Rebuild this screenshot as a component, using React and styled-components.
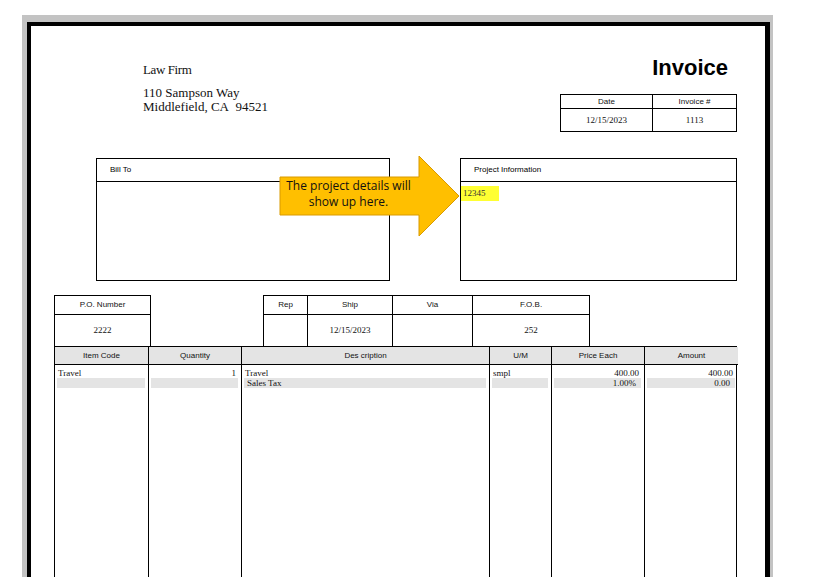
import React from 'react';
import styled, { createGlobalStyle } from 'styled-components';

const Global = createGlobalStyle`
  html, body { margin: 0; padding: 0; background: #fff; overflow: hidden; }
  body { width: 820px; height: 577px; }
`;

const Viewer = styled.div`
  width: 820px;
  height: 577px;
  background: #fff;
  padding: 15px 0 0 22px;
  box-sizing: border-box;
  overflow: hidden;
`;

const GrayBand = styled.div`
  width: 751px;
  height: 600px;
  background: #c3c3c3;
  padding: 7px 3px 0 5px;
  box-sizing: border-box;
`;

const Frame = styled.div`
  height: 600px;
  border: solid #000;
  border-width: 4px 5px 0 4px;
  background: #fff;
  box-sizing: border-box;
`;

const Content = styled.div`
  width: 683px;
  margin-left: 23px;
`;

const Header = styled.div`
  display: flex;
  justify-content: space-between;
  margin-left: 89px;
  padding-top: 30px;
  height: 105px;
  box-sizing: border-box;
`;

const Address = styled.div`
  font-family: "Liberation Serif", serif;
  font-size: 13px;
  line-height: 14px;
  color: #111;
  padding-top: 7px;
`;

const AddrLine = styled.div`
  margin-bottom: ${p => p.gap || 0}px;
  letter-spacing: ${p => p.tight ? '-0.4px' : '0'};
`;

const RightHead = styled.div`
  display: flex;
  flex-direction: column;
  align-items: flex-end;
`;

const Title = styled.div`
  font-family: "Liberation Sans", Arial, sans-serif;
  font-weight: bold;
  font-size: 22px;
  line-height: 24px;
  color: #000;
  margin-right: 9px;
  margin-bottom: 14px;
`;

const Table = styled.div`
  display: grid;
  grid-template-columns: ${p => p.cols};
  width: ${p => p.w}px;
  margin-left: ${p => p.ml || 0}px;
  border: 1px solid #000;
  box-sizing: border-box;
`;

const Head = styled.div`
  font-family: "Liberation Sans", Arial, sans-serif;
  font-size: 8px;
  color: #111;
  text-align: center;
  height: ${p => p.h || 13}px;
  line-height: ${p => p.h || 13}px;
  border-bottom: 1px solid #000;
  border-left: ${p => p.first ? 'none' : '1px solid #000'};
  background: ${p => p.shade ? '#e4e4e4' : '#fff'};
`;

const Cell = styled.div`
  font-family: "Liberation Serif", serif;
  font-size: 9px;
  color: #111;
  text-align: center;
  height: ${p => p.h || 22}px;
  line-height: ${p => p.h || 22}px;
  border-left: ${p => p.first ? 'none' : '1px solid #000'};
`;

const BoxRow = styled.div`
  display: flex;
  gap: 70px;
  margin-left: 42px;
  margin-top: 27px;
  position: relative;
`;

const Box = styled.div`
  width: ${p => p.w}px;
  height: 123px;
  border: 1px solid #000;
  box-sizing: border-box;
`;

const BoxHead = styled.div`
  font-family: "Liberation Sans", Arial, sans-serif;
  font-size: 8px;
  height: 22px;
  line-height: 22px;
  padding-left: 13px;
  border-bottom: 1px solid #000;
`;

const Highlight = styled.span`
  display: inline-block;
  margin-top: 0;
  background: #ffff33;
  font-family: "Liberation Serif", serif;
  font-size: 9px;
  padding: 2px 14px 3px 2px;
  color: #333;
`;

const Callout = styled.svg`
  position: absolute;
  left: 183px;
  top: -3px;
`;

const CalloutText = styled.div`
  position: absolute;
  left: 183px;
  top: 20px;
  width: 139px;
  text-align: center;
  font-family: "Open Sans", "Liberation Sans", sans-serif;
  font-size: 12px;
  line-height: 16px;
  color: #111;
`;

const MidRow = styled.div`
  display: flex;
  align-items: flex-end;
  gap: 112px;
  margin-top: 14px;
`;

const Main = styled.div`
  display: grid;
  grid-template-columns: 93px 93px 248px 62px 93px 94px;
  width: 683px;
  border: 1px solid #000;
  border-top: 1px solid #000;
  box-sizing: border-box;
  height: 240px;
  margin-top: -1px;
`;

const Col = styled.div`
  border-left: ${p => p.first ? 'none' : '1px solid #000'};
  display: flex;
  flex-direction: column;
`;

const Line = styled.div`
  font-family: "Liberation Serif", serif;
  font-size: 9px;
  line-height: 10px;
  height: 10px;
  padding: 0 ${p => p.right ? '5px' : '3px'};
  text-align: ${p => p.right ? 'right' : 'left'};
  background: ${p => p.shade ? '#e4e4e4' : 'transparent'};
  margin: 0 ${p => p.inset || 0}px 0 ${p => p.inset ? 2 : 0}px;
  color: #111;
`;

const mainCols = [
  { h: 'Item Code', rows: ['Travel', ''] },
  { h: 'Quantity', rows: ['1', ''], right: true },
  { h: 'Des cription', rows: ['Travel', 'Sales Tax'] },
  { h: 'U/M', rows: ['smpl', ''] },
  { h: 'Price Each', rows: ['400.00', '1.00%'], right: true },
  { h: 'Amount', rows: ['400.00', '0.00'], right: true },
];

export default function App() {
  return (
    <Viewer>
      <Global />
      <GrayBand>
        <Frame>
          <Content>
            <Header>
              <Address>
                <AddrLine gap={9} tight>Law Firm</AddrLine>
                <AddrLine>110 Sampson Way</AddrLine>
                <AddrLine>Middlefield, CA&nbsp;&nbsp;94521</AddrLine>
              </Address>
              <RightHead>
                <Title>Invoice</Title>
                <Table cols="91px 1fr" w={177}>
                  <Head first>Date</Head>
                  <Head>Invoice #</Head>
                  <Cell first>12/15/2023</Cell>
                  <Cell>1113</Cell>
                </Table>
              </RightHead>
            </Header>

            <BoxRow>
              <Box w={295}>
                <BoxHead>Bill To</BoxHead>
              </Box>
              <Box w={278}>
                <BoxHead>Project Information</BoxHead>
                <Highlight>12345</Highlight>
              </Box>
              <Callout width="182" height="82" viewBox="0 0 182 82">
                <path d="M1 22 H140 V1 L180 41 L140 81 V60 H1 Z" fill="#ffbf00" stroke="#d99a00" strokeWidth="1" />
              </Callout>
              <CalloutText>The project details will show up here.</CalloutText>
            </BoxRow>

            <MidRow>
              <Table cols="1fr" w={97}>
                <Head first h={18}>P.O. Number</Head>
                <Cell first h={31}>2222</Cell>
              </Table>
              <Table cols="43px 85px 80px 1fr" w={327}>
                <Head first h={18}>Rep</Head>
                <Head h={18}>Ship</Head>
                <Head h={18}>Via</Head>
                <Head h={18}>F.O.B.</Head>
                <Cell first h={31}></Cell>
                <Cell h={31}>12/15/2023</Cell>
                <Cell h={31}></Cell>
                <Cell h={31}>252</Cell>
              </Table>
            </MidRow>

            <Main>
              {mainCols.map((c, i) => (
                <Col key={c.h} first={i === 0}>
                  <Head first shade h={17}>{c.h}</Head>
                  <div style={{ height: 3 }} />
                  <Line right={c.right}>{c.rows[0]}</Line>
                  <Line right={c.right} shade inset={3}>{c.rows[1]}</Line>
                </Col>
              ))}
            </Main>
          </Content>
        </Frame>
      </GrayBand>
    </Viewer>
  );
}
